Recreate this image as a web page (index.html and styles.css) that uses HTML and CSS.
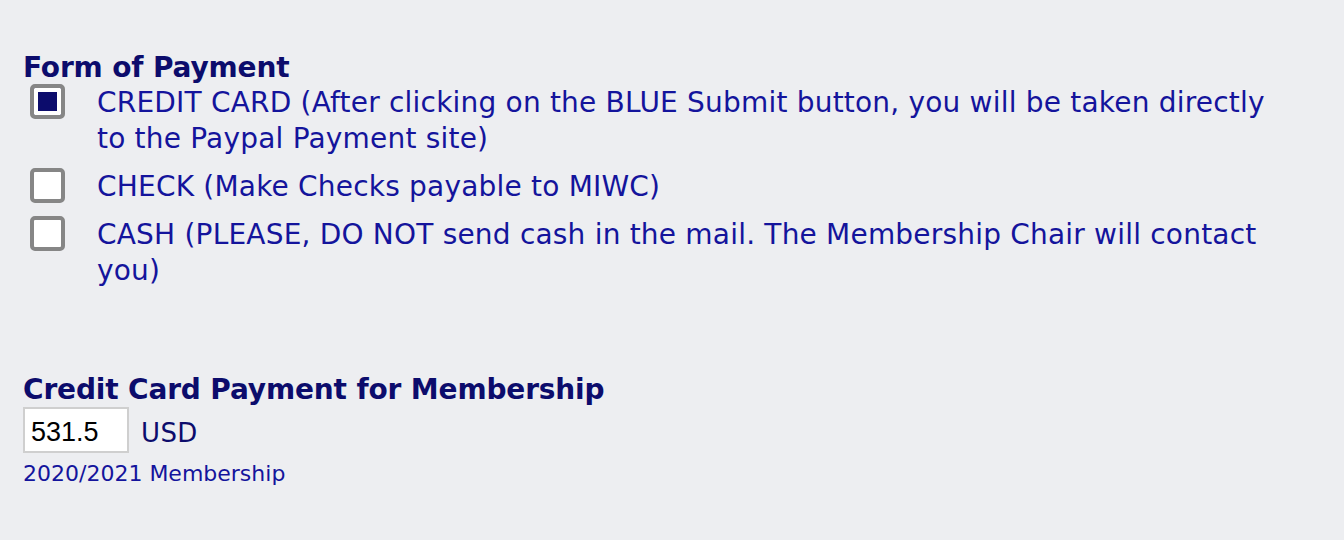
FILE: index.html
```html
<!DOCTYPE html>
<html lang="en">
<head>
    <meta charset="UTF-8">
    <title>Membership Payment</title>
    <link rel="stylesheet" href="styles.css">
</head>
<body>
    <form class="payment-form">
        <div class="field">
            <h2 class="field-title">Form of Payment</h2>
            <div class="options">
                <label class="option">
                    <input type="checkbox" name="pay_method" value="credit" class="option-check" checked>
                    <span class="option-text">CREDIT CARD (After clicking on the BLUE Submit button, you will be taken directly to the Paypal Payment site)</span>
                </label>
                <label class="option">
                    <input type="checkbox" name="pay_method" value="check" class="option-check">
                    <span class="option-text">CHECK (Make Checks payable to MIWC)</span>
                </label>
                <label class="option">
                    <input type="checkbox" name="pay_method" value="cash" class="option-check">
                    <span class="option-text">CASH (PLEASE, DO NOT send cash in the mail. The Membership Chair will contact you)</span>
                </label>
            </div>
        </div>

        <div class="field amount-field">
            <h2 class="field-title">Credit Card Payment for Membership</h2>
            <div class="amount-row">
                <input type="text" name="amount" class="amount-input" value="531.5" readonly>
                <span class="currency">USD</span>
            </div>
            <div class="amount-note">2020/2021 Membership</div>
        </div>
    </form>
</body>
</html>
```

FILE: styles.css
```css
* {
    margin: 0;
    padding: 0;
    box-sizing: border-box;
}

body {
    background: #edeef1;
    font-family: "DejaVu Sans", Verdana, sans-serif;
    padding: 52px 23px;
}

.payment-form {
    width: 1262px;
}

.field-title {
    font-size: 28px;
    font-weight: bold;
    line-height: 32px;
    letter-spacing: -0.15px;
    color: #0c0c6c;
}

.options {
    display: flex;
    flex-direction: column;
    gap: 11px;
}

.option {
    display: flex;
    align-items: flex-start;
    gap: 32px;
    cursor: pointer;
}

/* square grey checkbox, filled with a navy block when ticked */
.option-check {
    appearance: none;
    -webkit-appearance: none;
    flex: none;
    width: 35px;
    height: 35px;
    margin-left: 7px;
    border: 4px solid #868686;
    border-radius: 5px;
    background: #fff;
    cursor: pointer;
}

.option-check:checked {
    background: #0c0c6c;
    box-shadow: inset 0 0 0 4px #fff;
}

.option-text {
    padding-top: 1px;
    font-size: 28px;
    line-height: 36px;
    letter-spacing: 0.2px;
    color: #14149c;
}

.amount-field {
    margin-top: 85px;
}

.amount-row {
    display: flex;
    align-items: center;
    gap: 12px;
    margin-top: 1px;
}

.amount-input {
    width: 106px;
    height: 46px;
    padding: 4px 6px 0;
    border: 2px solid #cfcfcf;
    background: #fff;
    font-family: "Liberation Sans", Arial, sans-serif;
    font-size: 27px;
    color: #000;
    outline: none;
}

.currency {
    padding-top: 5px;
    font-size: 26px;
    letter-spacing: 0.4px;
    color: #0c0c6c;
}

.amount-note {
    margin-top: 7px;
    font-size: 22px;
    line-height: 28px;
    color: #14149c;
}
```
